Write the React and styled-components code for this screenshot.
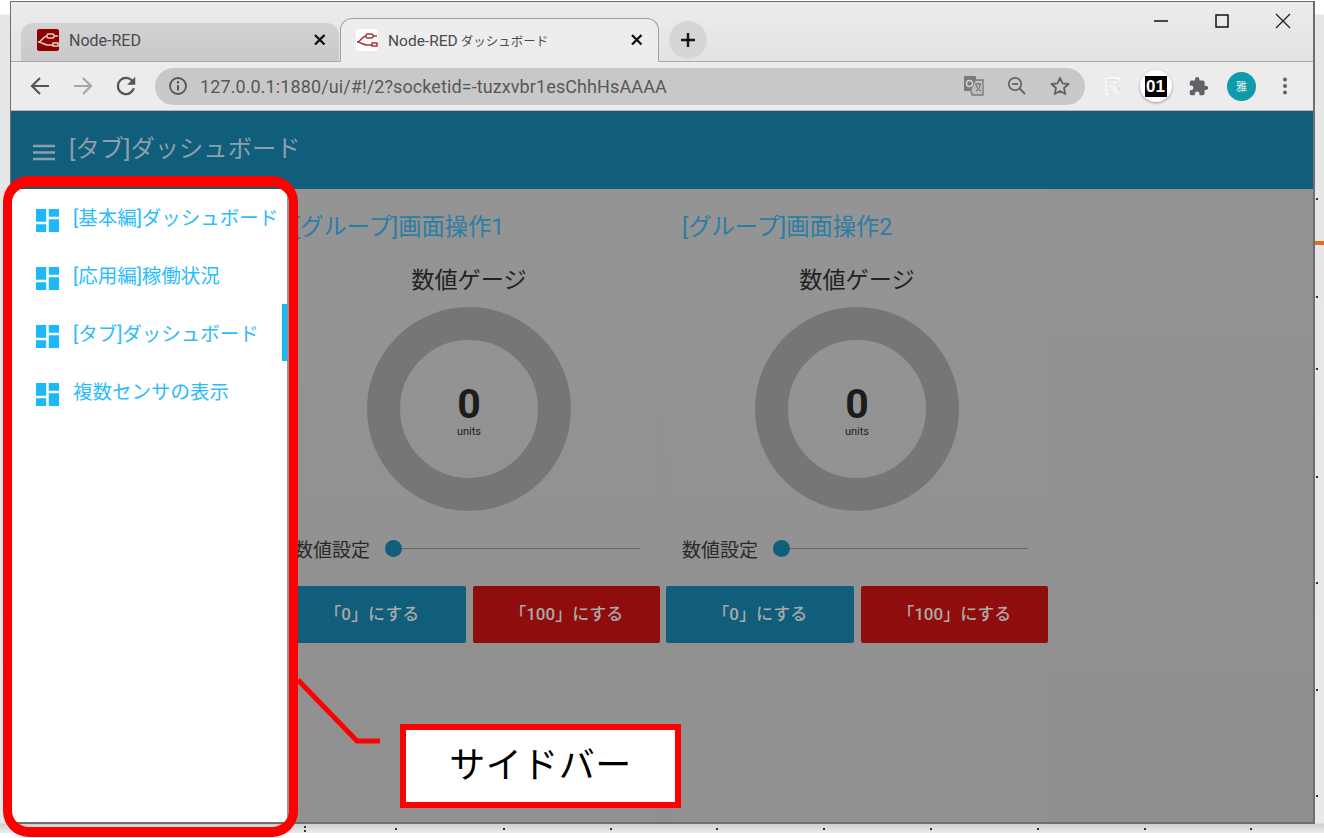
import React from "react";
import styled, { createGlobalStyle } from "styled-components";

const FONT = `Roboto, "Noto Sans CJK JP", sans-serif`;

const Global = createGlobalStyle`
  html, body { margin: 0; padding: 0; background: #fff; }
  body { font-family: ${FONT}; }
  * { box-sizing: border-box; }
`;

const Stage = styled.div`
  position: relative;
  width: 1324px;
  height: 838px;
  overflow: hidden;
  background: linear-gradient(#fff 14px, #e6e6e6 15px, #e9e9e9 823px, #cfcfcf 824px, #ececec 833px, #fff 833px);
  padding: 1px 9px 0 10px;
`;
const Win = styled.div`
  width: 1305px;
  height: 823px;
  border: 1px solid #6e6e6e;
  border-width: 1px 2px 2px 1px;
  display: flex;
  flex-direction: column;
  background: #929292;
`;
const TabStrip = styled.div`
  height: 60px;
  flex: none;
  display: flex;
  align-items: flex-end;
  padding-left: 10px;
  background: linear-gradient(#ececec, #e3e3e3);
  border-bottom: 1px solid #a9a9a9;
  position: relative;
`;
const Tab = styled.div`
  width: ${p => (p.$active ? "319px" : "318px")};
  height: ${p => (p.$active ? "44px" : "39px")};
  margin-bottom: -1px;
  margin-right: 1px;
  display: flex;
  align-items: center;
  padding: ${p => (p.$active ? "0 13px 0 15px" : "0 11px 4px 16px")};
  background: ${p => (p.$active ? "#ededed" : "linear-gradient(#d3d3d3, #c9c9c9)")};
  border-radius: 12px 12px 0 0;
  border: ${p => (p.$active ? "1px solid #a0a0a0" : "none")};
  border-bottom: ${p => (p.$active ? "1px solid #ededed" : "1px solid #a9a9a9")};
  position: relative;
  z-index: ${p => (p.$active ? 2 : 1)};
`;
const TabTitle = styled.span`
  flex: 1;
  margin-left: 10px;
  font-size: ${p => (p.$active ? "15.5px" : "16px")};
  color: #4a4a4a;
  white-space: nowrap;
`;
const TabTitleJp = styled.span`
  font-size: 12.5px;
  margin-left: 3px;
`;
const NewTab = styled.div`
  width: 38px;
  height: 38px;
  margin: 0 0 2px 9px;
  border-radius: 50%;
  background: #d6d6d6;
  display: flex;
  align-items: center;
  justify-content: center;
`;
const WinControls = styled.div`
  position: absolute;
  right: 22px;
  top: 11px;
  display: flex;
  gap: 45px;
  align-items: center;
`;
const Toolbar = styled.div`
  height: 49px;
  flex: none;
  display: flex;
  align-items: center;
  background: #ececec;
  padding-left: 18px;
  border-bottom: 1px solid #b5b5b5;
`;
const NavGroup = styled.div`
  display: flex;
  gap: 21px;
  align-items: center;
  margin-right: 18px;
`;
const Omnibox = styled.div`
  width: 930px;
  height: 37px;
  flex: none;
  border-radius: 19px;
  background: #c8c8c8;
  display: flex;
  align-items: center;
  padding: 0 15px 0 13px;
`;
const Url = styled.span`
  flex: 1;
  margin-left: 12px;
  font-size: 18px;
  letter-spacing: 0.1px;
  color: #585858;
  white-space: nowrap;
`;
const OmniIcons = styled.div`
  display: flex;
  gap: 23px;
  align-items: center;
`;
const ExtIcons = styled.div`
  display: flex;
  align-items: center;
  margin-left: 6px;
`;
const ExtSlot = styled.div`
  width: 43px;
  height: 40px;
  display: flex;
  align-items: center;
  justify-content: center;
`;
const BadgeRound = styled.div`
  width: 32px;
  height: 32px;
  border-radius: 50%;
  background: #fff;
  box-shadow: 0 1px 3px rgba(0,0,0,.35);
  display: flex;
  align-items: center;
  justify-content: center;
`;
const BadgeInner = styled.span`
  width: 22px;
  height: 21px;
  background: #000;
  color: #fff;
  font: 700 17px/21px "Liberation Sans", sans-serif;
  text-align: center;
`;
const Avatar = styled.div`
  width: 29px;
  height: 29px;
  border-radius: 50%;
  background: #0f9bab;
  color: #e6f5f6;
  font-size: 11px;
  display: flex;
  align-items: center;
  justify-content: center;
`;
const Header = styled.div`
  height: 78px;
  flex: none;
  background: #105d7c;
  display: flex;
  align-items: center;
  padding: 0 0 3px 22px;
  gap: 14px;
`;
const HeaderTitle = styled.div`
  font-size: 24.3px;
  color: #8ba0aa;
  white-space: nowrap;
  margin-top: -5px;
`;
const Content = styled.div`
  flex: 1;
  display: flex;
  gap: 6px;
  padding-left: 267px;
  background: linear-gradient(#939393, #8f8f8f);
`;
const Group = styled.section`
  width: 382px;
  background: rgba(255, 255, 255, 0.012);
  display: flex;
  flex-direction: column;
`;
const GroupTitle = styled.h2`
  margin: 24px 0 0 16px;
  font-size: 23.3px;
  line-height: 28px;
  font-weight: 400;
  color: #2a7ea6;
  white-space: nowrap;
`;
const GaugeTitle = styled.div`
  margin-top: 24px;
  text-align: center;
  font-size: 23.2px;
  line-height: 30px;
  color: #222;
`;
const GaugeWrap = styled.div`
  margin: 12px auto 0;
  width: 204px;
  height: 204px;
`;
const GaugeRing = styled.div`
  width: 204px;
  height: 204px;
  border-radius: 50%;
  border: 33px solid #767676;
  display: flex;
  flex-direction: column;
  align-items: center;
  justify-content: center;
`;
const GaugeValue = styled.div`
  font-size: 41px;
  line-height: 40px;
  font-weight: 700;
  color: #1c1c1c;
  margin-top: 4px;
`;
const GaugeUnit = styled.div`
  font-size: 11px;
  line-height: 14px;
  margin-top: 1px;
  color: #222;
`;
const SliderRow = styled.div`
  display: flex;
  align-items: center;
  margin: 25px 20px 0 16px;
  height: 24px;
`;
const SliderLabel = styled.span`
  font-size: 19px;
  color: #2a2a2a;
  white-space: nowrap;
  margin-right: 15px;
`;
const Thumb = styled.span`
  width: 17px;
  height: 17px;
  flex: none;
  border-radius: 50%;
  background: #105d7c;
`;
const Track = styled.span`
  flex: 1;
  height: 1px;
  background: #686868;
`;
const Buttons = styled.div`
  display: flex;
  gap: 7px;
  margin-top: 26px;
`;
const Btn = styled.button`
  width: 188px;
  height: 57px;
  border: 0;
  border-radius: 2px;
  background: ${p => p.$bg};
  color: #a9a9a9;
  font: 500 17px ${FONT};
  padding: 0 0 4px;
`;
const Sidebar = styled.nav`
  position: absolute;
  left: 11px;
  top: 189px;
  width: 276px;
  height: 633px;
  background: #fff;
  box-shadow: 3px 0 0 #949494;
`;
const NavItem = styled.div`
  height: 58px;
  display: flex;
  align-items: center;
  padding-left: 25px;
  gap: 14px;
  color: #2dbcfb;
  font-size: 19.5px;
  white-space: nowrap;
  position: relative;
  ${p => p.$active && `
    &::after {
      content: "";
      position: absolute;
      right: 0;
      top: -1px;
      width: 5px;
      height: 57px;
      background: #1db8fb;
    }
  `}
`;
const NavIcon = styled.svg`
  flex: none;
  margin-top: 4px;
`;
const NavLabel = styled.span`
  margin-top: -4px;
`;
const RedFrame = styled.div`
  position: absolute;
  left: 3px;
  top: 176px;
  width: 295px;
  height: 661px;
  border: 9px solid #ff0000;
  border-top-width: 11px;
  border-bottom-width: 10px;
  border-radius: 26px;
  pointer-events: none;
`;
const Leader = styled.svg`
  position: absolute;
  left: 290px;
  top: 675px;
`;
const Callout = styled.div`
  position: absolute;
  left: 400px;
  top: 724px;
  width: 281px;
  height: 84px;
  background: #fff;
  border: 6px solid #ff0000;
  color: #000;
  font-size: 36px;
  font-weight: 400;
  display: flex;
  align-items: center;
  justify-content: center;
  letter-spacing: 0.5px;
  padding-bottom: 8px;
`;
const OrangeMark = styled.div`
  position: absolute;
  left: 1315px;
  top: 241px;
  width: 9px;
  height: 4px;
  background: #e0701f;
`;
const Tick = styled.span`
  position: absolute;
  left: ${p => p.$x}px;
  top: ${p => p.$y}px;
  width: 2px;
  height: 2px;
  background: #333;
`;

const Favicon = ({ active }) => (
  <svg width="22" height="22" viewBox="0 0 22 22">
    <rect width="22" height="22" rx="2" fill={active ? "#fff" : "#8f0000"} />
    <g fill="none" stroke={active ? "#a33a3a" : "#eec9c9"} strokeWidth="1.5">
      <rect x="10" y="5" width="7" height="4" rx="1.5" />
      <path d="M1 13c4 0 5-6 9-6M1 13c4 0 6 3 10 3h5M17 7h4" />
      <path d="M16 14h5v3h-5z" />
    </g>
  </svg>
);
const CloseX = () => (
  <svg width="16" height="16" viewBox="0 0 16 16">
    <path d="M3 3l9.5 9.5M12.5 3L3 12.5" stroke="#111" strokeWidth="2.3" />
  </svg>
);
const Dashboard = () => (
  <NavIcon width="23" height="23" viewBox="3 3 18 18">
    <path fill="#1db8fb" d="M3 13h8V3H3v10zm0 8h8v-6H3v6zm10 0h8V11h-8v10zm0-18v6h8V3h-8z" />
  </NavIcon>
);
const Arrow = ({ color, flip }) => (
  <svg width="22" height="22" viewBox="0 0 22 22" style={flip ? { transform: "scaleX(-1)" } : undefined}>
    <path d="M20 11H3M11 3l-8 8 8 8" fill="none" stroke={color} strokeWidth="2.2" />
  </svg>
);
const Reload = () => (
  <svg width="22" height="22" viewBox="2.5 2.5 19 19">
    <path fill="#555" d="M17.65 6.35A7.96 7.96 0 0 0 12 4a8 8 0 1 0 7.73 10h-2.08A6 6 0 1 1 12 6c1.66 0 3.14.69 4.22 1.78L13 11h7V4l-2.35 2.35z" />
  </svg>
);
const Info = () => (
  <svg width="20" height="20" viewBox="0 0 20 20">
    <circle cx="10" cy="10" r="8" fill="none" stroke="#555" strokeWidth="1.8" />
    <path d="M10 9v5.5" stroke="#555" strokeWidth="2" />
    <circle cx="10" cy="6.3" r="1.2" fill="#555" />
  </svg>
);
const Translate = () => (
  <svg width="20" height="20" viewBox="0 0 20 20">
    <rect x="0" y="0" width="12" height="15" rx="1" fill="#7a7a7a" />
    <path d="M12 4h7v15H8l-1-4" fill="#bdbdbd" stroke="#7a7a7a" strokeWidth="1.4" />
    <circle cx="5.5" cy="7.5" r="3" fill="none" stroke="#d5d5d5" strokeWidth="1.4" />
    <path d="M11 8h6M14 7v1M12 15c3-2 4-4 4-7M12 9c1 3 3 5 5 6" fill="none" stroke="#666" strokeWidth="1" />
  </svg>
);
const ZoomOut = () => (
  <svg width="20" height="20" viewBox="0 0 20 20">
    <circle cx="8" cy="8" r="6.2" fill="none" stroke="#666" strokeWidth="1.8" />
    <path d="M12.5 12.5L18 18" stroke="#666" strokeWidth="2" />
    <path d="M5 8h6" stroke="#666" strokeWidth="1.8" />
  </svg>
);
const Star = () => (
  <svg width="20" height="20" viewBox="0 0 20 20">
    <path d="M10 1.8l2.5 5.6 6 .6-4.5 4 1.3 6L10 15l-5.3 3 1.3-6-4.5-4 6-.6z" fill="none" stroke="#5f6368" strokeWidth="1.8" strokeLinejoin="round" />
  </svg>
);
const GhostExt = () => (
  <svg width="22" height="22" viewBox="0 0 22 22">
    <path d="M3 3h14v3M4 3v14M3 19h4M8 10l9 9M12 6l5 6" fill="none" stroke="#f8f8f8" strokeWidth="2" />
    <path d="M5 5h10M14 8l4 7" stroke="#d9d9d9" strokeWidth="1" fill="none" />
  </svg>
);
const Puzzle = () => (
  <svg width="21" height="21" viewBox="0 0 24 24">
    <path fill="#5f6368" d="M20.5 11H19V7a2 2 0 0 0-2-2h-4V3.5a2.5 2.5 0 0 0-5 0V5H4a2 2 0 0 0-2 2v3.8h1.5a2.7 2.7 0 0 1 0 5.4H2V20a2 2 0 0 0 2 2h3.8v-1.5a2.7 2.7 0 0 1 5.4 0V22H17a2 2 0 0 0 2-2v-4h1.5a2.5 2.5 0 0 0 0-5z" />
  </svg>
);
const Kebab = () => (
  <svg width="6" height="18" viewBox="0 0 6 18">
    <circle cx="3" cy="2.5" r="2" fill="#5f6368" />
    <circle cx="3" cy="9" r="2" fill="#5f6368" />
    <circle cx="3" cy="15.5" r="2" fill="#5f6368" />
  </svg>
);
const Hamburger = () => (
  <svg width="22" height="17" viewBox="0 0 22 17" style={{ marginTop: 7 }}>
    <path d="M0 2h22M0 8.5h22M0 15h22" stroke="#8ba0aa" strokeWidth="2.6" />
  </svg>
);

const groups = ["[グループ]画面操作1", "[グループ]画面操作2"];
const items = ["[基本編]ダッシュボード", "[応用編]稼働状況", "[タブ]ダッシュボード", "複数センサの表示"];
const ticks = [
  [395, 828], [503, 828], [610, 828], [716, 828], [823, 828], [930, 828], [1037, 828], [1144, 828], [1250, 828],
  [1316, 296], [1316, 198], [1316, 368], [1316, 476], [1316, 582], [1316, 689], [1316, 795], [304, 826], [304, 830],
];

export default function App() {
  return (
    <Stage>
      <Global />
      <Win>
        <TabStrip>
          <Tab>
            <Favicon />
            <TabTitle>Node-RED</TabTitle>
            <CloseX />
          </Tab>
          <Tab $active>
            <Favicon active />
            <TabTitle $active>Node-RED<TabTitleJp>ダッシュボード</TabTitleJp></TabTitle>
            <CloseX />
          </Tab>
          <NewTab>
            <svg width="18" height="18" viewBox="0 0 18 18">
              <path d="M9 2v14M2 9h14" stroke="#111" strokeWidth="2.4" />
            </svg>
          </NewTab>
          <WinControls>
            <svg width="16" height="16" viewBox="0 0 16 16"><path d="M1 8h14" stroke="#111" strokeWidth="1.5" /></svg>
            <svg width="16" height="16" viewBox="0 0 16 16"><rect x="2" y="2" width="12" height="12" fill="none" stroke="#111" strokeWidth="1.5" /></svg>
            <svg width="16" height="16" viewBox="0 0 16 16"><path d="M1 1l14 14M15 1L1 15" stroke="#222" strokeWidth="1.3" /></svg>
          </WinControls>
        </TabStrip>
        <Toolbar>
          <NavGroup>
            <Arrow color="#555" />
            <Arrow color="#a6a6a6" flip />
            <Reload />
          </NavGroup>
          <Omnibox>
            <Info />
            <Url>127.0.0.1:1880/ui/#!/2?socketid=-tuzxvbr1esChhHsAAAA</Url>
            <OmniIcons>
              <Translate />
              <ZoomOut />
              <Star />
            </OmniIcons>
          </Omnibox>
          <ExtIcons>
            <ExtSlot><GhostExt /></ExtSlot>
            <ExtSlot><BadgeRound><BadgeInner>01</BadgeInner></BadgeRound></ExtSlot>
            <ExtSlot><Puzzle /></ExtSlot>
            <ExtSlot><Avatar>雅</Avatar></ExtSlot>
            <ExtSlot><Kebab /></ExtSlot>
          </ExtIcons>
        </Toolbar>
        <Header>
          <Hamburger />
          <HeaderTitle>[タブ]ダッシュボード</HeaderTitle>
        </Header>
        <Content>
          {groups.map(g => (
            <Group key={g}>
              <GroupTitle>{g}</GroupTitle>
              <GaugeTitle>数値ゲージ</GaugeTitle>
              <GaugeWrap>
                <GaugeRing>
                  <GaugeValue>0</GaugeValue>
                  <GaugeUnit>units</GaugeUnit>
                </GaugeRing>
              </GaugeWrap>
              <SliderRow>
                <SliderLabel>数値設定</SliderLabel>
                <Thumb />
                <Track />
              </SliderRow>
              <Buttons>
                <Btn $bg="#105d7c">「0」にする</Btn>
                <Btn $bg="#900d0d">「100」にする</Btn>
              </Buttons>
            </Group>
          ))}
        </Content>
      </Win>
      <Sidebar>
        {items.map((t, i) => (
          <NavItem key={t} $active={i === 2}>
            <Dashboard />
            <NavLabel>{t}</NavLabel>
          </NavItem>
        ))}
      </Sidebar>
      <RedFrame />
      <Leader width="100" height="75" viewBox="0 0 100 75">
        <path d="M8 5l59 61h23" fill="none" stroke="#ff0000" strokeWidth="5" />
      </Leader>
      <Callout>サイドバー</Callout>
      <OrangeMark />
      {ticks.map(([x, y]) => <Tick key={`${x}-${y}`} $x={x} $y={y} />)}
    </Stage>
  );
}
